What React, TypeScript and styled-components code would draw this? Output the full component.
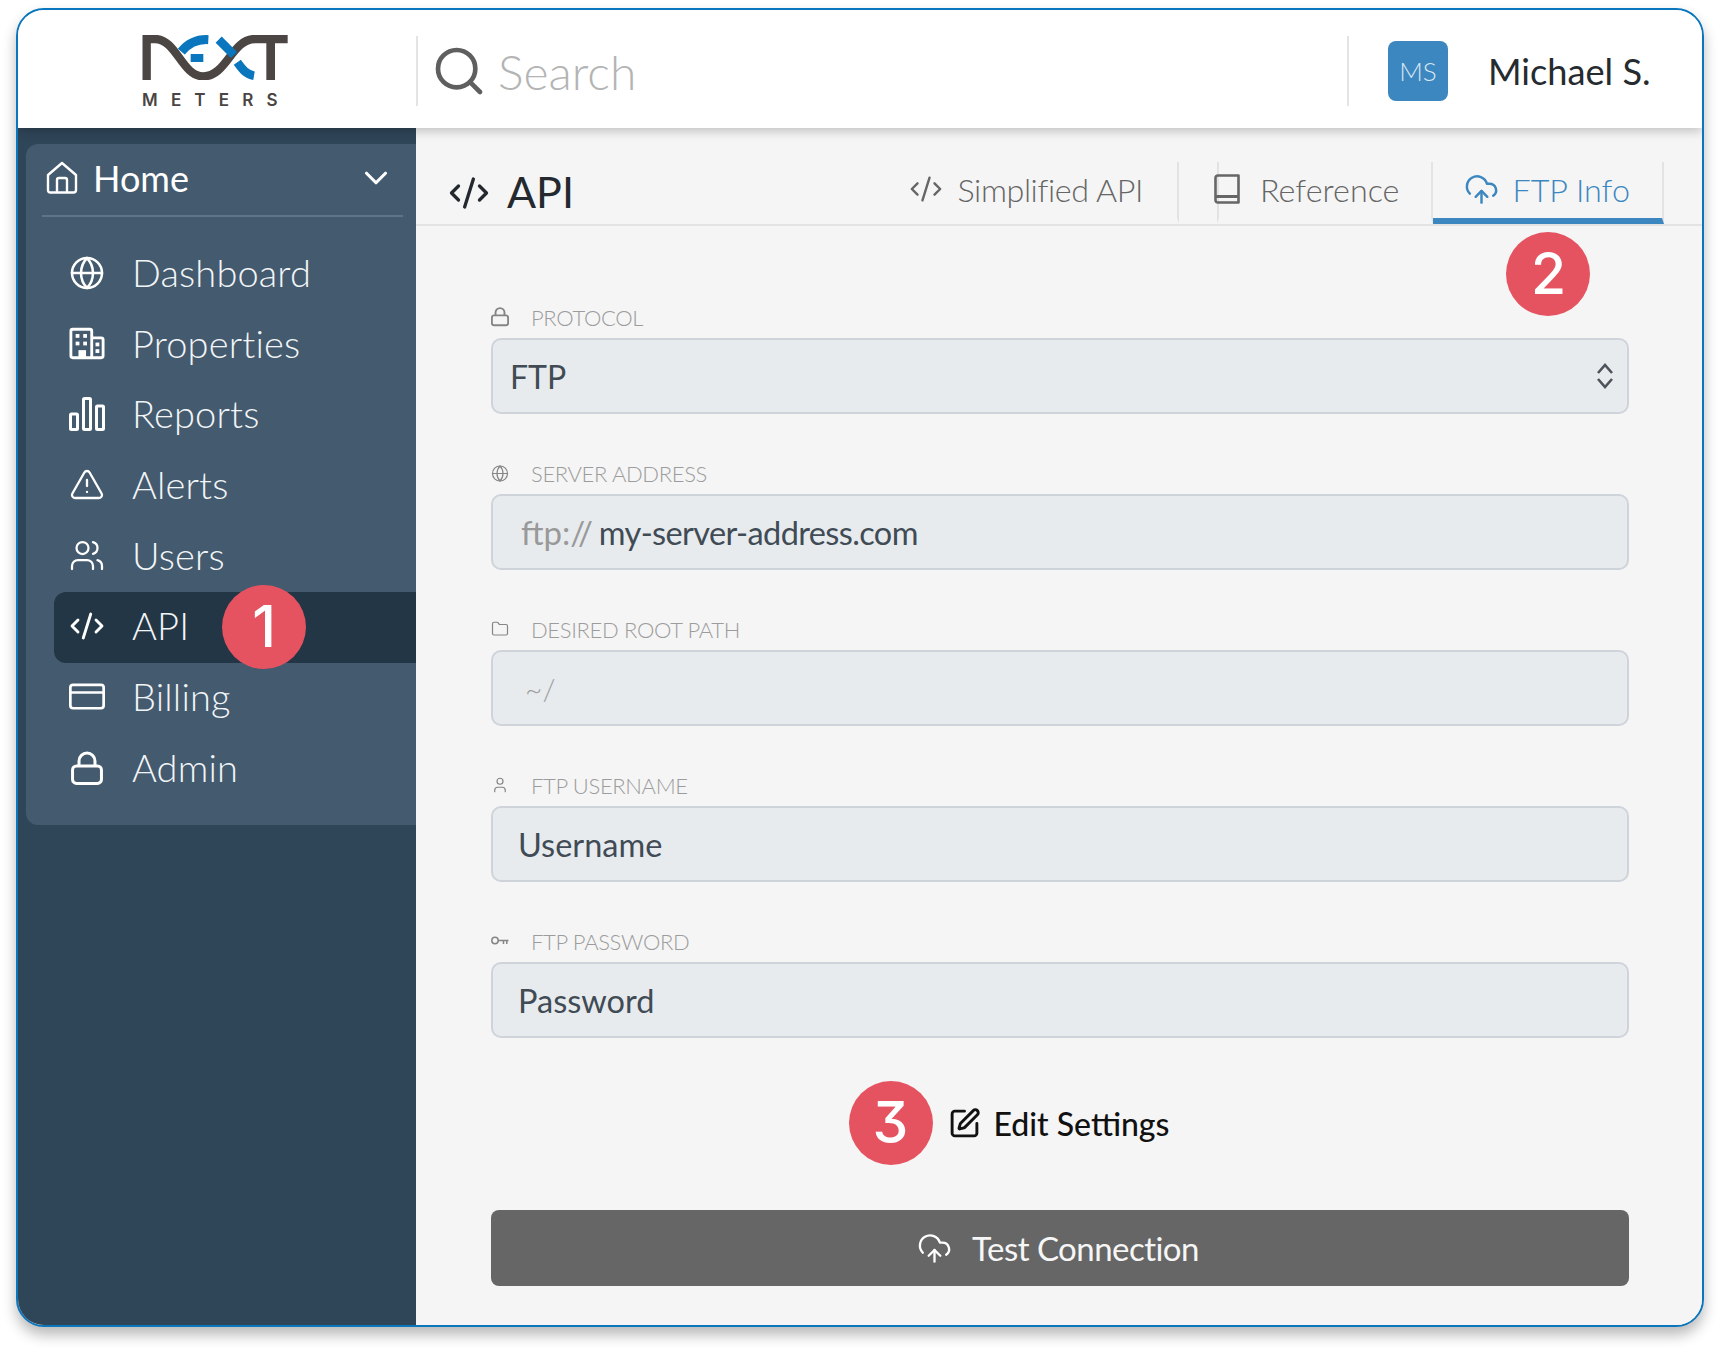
import React from "react";
import styled, { createGlobalStyle } from "styled-components";
import {
  ChevronDown, Globe, TriangleAlert, Users, CodeXml, CloudUpload, Folder, User, SquarePen, Search,
} from "lucide-react";

const Global = createGlobalStyle`
  html, body { margin: 0; padding: 0; background: #fff; }
  body { font-family: Lato, "Open Sans", sans-serif; }
  * { box-sizing: border-box; }
`;

const Page = styled.div`
  width: 1720px;
  height: 1352px;
  padding: 8px 16px 25px;
`;
const Card = styled.div`
  width: 1688px;
  height: 1319px;
  border: 2px solid #0a76bd;
  border-radius: 28px;
  overflow: hidden;
  display: flex;
  flex-direction: column;
  box-shadow: 0 8px 14px rgba(0, 0, 0, 0.28);
  background: #f5f5f5;
`;
const Header = styled.header`
  height: 118px;
  flex: none;
  display: flex;
  align-items: center;
  padding-top: 4px;
  background: #fff;
  position: relative;
  z-index: 2;
  box-shadow: 0 3px 10px rgba(0, 0, 0, 0.22);
`;
const LogoCell = styled.div`
  width: 398px;
  flex: none;
  display: flex;
  flex-direction: column;
  align-items: flex-start;
  padding-left: 124px;
`;
const LogoMark = styled.svg`
  width: 146px;
  height: 45px;
  display: block;
`;
const LogoWord = styled.div`
  margin-top: 12px;
  font-family: Inter, sans-serif;
  font-weight: 600;
  font-size: 17px;
  line-height: 16px;
  letter-spacing: 13.2px;
  color: #4a4543;
  white-space: nowrap;
`;
const HeaderDivider = styled.div`
  width: 2px;
  height: 70px;
  flex: none;
  background: #e4e4e4;
`;
const SearchArea = styled.div`
  flex: 1;
  display: flex;
  align-items: center;
  gap: 11px;
  padding-left: 13px;
  color: #5f5f5f;
`;
const SearchText = styled.span`
  font-weight: 300;
  font-size: 48px;
  color: #b4b4b4;
`;
const UserArea = styled.div`
  width: 353px;
  flex: none;
  display: flex;
  align-items: center;
  padding-left: 39px;
`;
const Avatar = styled.div`
  width: 60px;
  height: 60px;
  border-radius: 8px;
  background: #3d87c0;
  color: #d6e6f2;
  font-weight: 300;
  font-size: 26px;
  display: flex;
  align-items: center;
  justify-content: center;
`;
const UserName = styled.span`
  margin-left: 40px;
  font-size: 36.2px;
  color: #262b2f;
`;

const Body = styled.div`
  flex: 1;
  display: flex;
  min-height: 0;
`;
const Sidebar = styled.aside`
  width: 398px;
  flex: none;
  background: #2f4558;
  padding: 16px 0 0 8px;
`;
const Panel = styled.div`
  height: 681px;
  background: #445a6e;
  border-radius: 12px 0 0 12px;
`;
const HomeRow = styled.div`
  height: 71px;
  display: flex;
  align-items: center;
  padding: 0 21px 4px 20px;
  color: #fff;
`;
const HomeText = styled.span`
  flex: 1;
  margin-left: 15px;
  font-size: 36px;
`;
const PanelDivider = styled.div`
  height: 2px;
  margin: 0 13px 0 16px;
  background: #5f7488;
`;
const NavList = styled.nav`
  margin-top: 22px;
  display: flex;
  flex-direction: column;
`;
const NavRow = styled.div<{ $active?: boolean }>`
  position: relative;
  height: 70.7px;
  margin-left: 28px;
  padding: 0 0 3px 15px;
  display: flex;
  align-items: center;
  gap: 27px;
  color: #fff;
  border-radius: 12px 0 0 12px;
  background: ${(p) => (p.$active ? "#233645" : "transparent")};
`;
const NavIcon = styled.span`
  width: 36px;
  height: 36px;
  flex: none;
  display: flex;
  align-items: center;
  justify-content: center;
`;
const NavText = styled.span`
  font-weight: 300;
  font-size: 38px;
  letter-spacing: 0.15px;
  margin-bottom: 2px;
  color: #f2f5f7;
`;
const Badge = styled.div<{ $x: number; $y: number }>`
  position: absolute;
  left: ${(p) => p.$x}px;
  top: ${(p) => p.$y}px;
  width: 84px;
  height: 84px;
  border-radius: 50%;
  background: #e55361;
  color: #fff;
  font-family: Inter, sans-serif;
  font-feature-settings: "cv09";
  font-weight: 500;
  font-size: 57px;
  line-height: 84px;
  text-align: center;
  z-index: 3;
`;

const Main = styled.main`
  flex: 1;
  display: flex;
  flex-direction: column;
  min-width: 0;
  background: #f5f5f5;
`;
const SubHeader = styled.div`
  height: 98px;
  flex: none;
  padding: 34px 38px 0 32px;
  display: flex;
  align-items: stretch;
  border-bottom: 2px solid #e3e3e3;
`;
const Title = styled.div`
  flex: 1;
  display: flex;
  align-items: center;
  gap: 17px;
  color: #23292e;
`;
const TitleText = styled.span`
  font-size: 43px;
  margin-bottom: 4px;
  color: #23292e;
`;
const Tabs = styled.div`
  display: flex;
  gap: 38px;
`;
const TabGroup = styled.div`
  display: flex;
`;
const Tab = styled.div<{ $active?: boolean; $flush?: boolean; $gap: number; $left: number; $right: number }>`
  position: relative;
  display: flex;
  align-items: center;
  gap: ${(p) => p.$gap}px;
  padding: 0 ${(p) => p.$right}px 2px ${(p) => p.$left}px;
  border-right: 2px solid #e3e3e3;
  border-left: ${(p) => (p.$flush ? "2px solid #e3e3e3" : "none")};
  color: ${(p) => (p.$active ? "#3d87c0" : "#666")};
  border-bottom: 6px solid ${(p) => (p.$active ? "#3d87c0" : "transparent")};
`;
const TabText = styled.span<{ $tight?: boolean }>`
  font-weight: 300;
  font-size: 32.3px;
  letter-spacing: ${(p) => (p.$tight ? "-0.4px" : "0")};
`;
const BookWrap = styled.span`
  display: flex;
  margin-left: -5px;
`;

const Form = styled.div`
  flex: 1;
  padding: 79px 73px 0 75px;
  display: flex;
  flex-direction: column;
`;
const Group = styled.div`
  height: 156px;
  flex: none;
  display: flex;
  flex-direction: column;
`;
const LabelRow = styled.div`
  height: 33px;
  padding-bottom: 9px;
  display: flex;
  align-items: center;
  color: #858585;
`;
const LabelIcon = styled.span`
  width: 18px;
  display: flex;
  justify-content: center;
  margin-right: 22px;
`;
const LabelText = styled.span`
  font-weight: 300;
  font-size: 22px;
  letter-spacing: -0.35px;
  color: #9c9c9c;
`;
const Field = styled.div<{ $pad: number }>`
  height: 76px;
  flex: none;
  padding-left: ${(p) => p.$pad}px;
  display: flex;
  align-items: center;
  position: relative;
  background: #e8ebee;
  border: 2px solid #cfd4da;
  border-radius: 10px;
  font-size: 32.5px;
  color: #414b55;
`;
const SelectValue = styled.span`
  font-size: 32px;
`;
const Prefix = styled.span`
  color: #999;
  font-size: 33px;
  margin-right: 6px;
`;
const Address = styled.span`
  letter-spacing: -0.62px;
`;
const Muted = styled.span`
  font-weight: 300;
  font-size: 30px;
  color: #9f9f9f;
`;
const Stepper = styled.svg`
  position: absolute;
  right: 13px;
  top: 22px;
  width: 18px;
  height: 28px;
`;
const EditRow = styled.div`
  position: relative;
  align-self: center;
  height: 40px;
  margin-top: 18px;
  padding-right: 3px;
  display: flex;
  align-items: center;
  gap: 13px;
  color: #111;
`;
const EditText = styled.span`
  font-size: 32px;
  font-weight: 500;
  color: #111;
`;
const TestButton = styled.div`
  height: 76px;
  margin-top: 67px;
  padding-right: 4px;
  flex: none;
  display: flex;
  align-items: center;
  justify-content: center;
  gap: 20px;
  background: #666;
  border-radius: 8px;
  color: #fff;
`;
const TestText = styled.span`
  font-size: 33px;
  letter-spacing: -0.53px;
  color: #f6f6f6;
`;

const HomeIcon = () => (
  <svg width="32" height="33" viewBox="0 0 32 33" fill="none" stroke="currentColor" strokeWidth="2.4" strokeLinejoin="round">
    <path d="M16 2 L30 14 V29 Q30 31.5 27.5 31.5 H4.5 Q2 31.5 2 29 V14 Z" />
    <path d="M11 31 V19 Q11 17 13 17 H19 Q21 17 21 19 V31" />
  </svg>
);
const BuildingIcon = () => (
  <svg width="40" height="35" viewBox="0 0 38 34" fill="none" stroke="currentColor" strokeWidth="3" strokeLinejoin="round">
    <path d="M4 2 H22 Q24 2 24 4 V32 H4 Q2 32 2 30 V4 Q2 2 4 2 Z" />
    <path d="M24 11 H34 Q36 11 36 13 V30 Q36 32 34 32 H24" />
    <g fill="currentColor" stroke="none">
      <rect x="7" y="7" width="4" height="4" /><rect x="15" y="7" width="4" height="4" />
      <rect x="7" y="15" width="4" height="4" /><rect x="15" y="15" width="4" height="4" />
      <rect x="28" y="16" width="4" height="4" /><rect x="28" y="23" width="4" height="4" />
      <rect x="10" y="24" width="8" height="8" />
    </g>
  </svg>
);
const BarsIcon = () => (
  <svg width="36" height="34" viewBox="0 0 36 34" fill="none" stroke="currentColor" strokeWidth="3">
    <rect x="1.5" y="17" width="7" height="15.5" rx="1" />
    <rect x="14.5" y="1.5" width="7" height="31" rx="1" />
    <rect x="27.5" y="9" width="7" height="23.5" rx="1" />
  </svg>
);
const CardIcon = () => (
  <svg width="40" height="30" viewBox="0 0 40 30" fill="none" stroke="currentColor" strokeWidth="3">
    <rect x="1.5" y="1.5" width="37" height="26" rx="3" />
    <path d="M1.5 10 H38.5" />
  </svg>
);
const LockIcon = ({ w = 32 }: { w?: number }) => (
  <svg width={w} height={w * 1.06} viewBox="0 0 32 34" fill="none" stroke="currentColor" strokeWidth={w < 20 ? 3.4 : 3}>
    <rect x="1.5" y="15" width="29" height="17.5" rx="4" />
    <path d="M8 15 V10 A8 8 0 0 1 24 10 V15" />
  </svg>
);
const BookIcon = () => (
  <svg width="26" height="30" viewBox="0 0 26 30" fill="none" stroke="currentColor" strokeWidth="2.6" strokeLinejoin="round">
    <path d="M4 1.5 H24.5 V28.5 H4 Q1.5 28.5 1.5 26 V4 Q1.5 1.5 4 1.5 Z" />
    <path d="M1.5 22.5 H24.5" strokeWidth="3" />
  </svg>
);
const KeyIcon = () => (
  <svg width="18" height="10" viewBox="0 0 18 10" fill="none" stroke="currentColor" strokeWidth="1.5">
    <circle cx="4" cy="4.5" r="3.2" />
    <path d="M7.2 4.5 H17.5 M12.5 4.5 V8 M15.8 4.5 V8" />
  </svg>
);

const nav: { label: string; icon: React.ReactNode; active?: boolean }[] = [
  { label: "Dashboard", icon: <Globe size={44} strokeWidth={1.7} /> },
  { label: "Properties", icon: <BuildingIcon /> },
  { label: "Reports", icon: <BarsIcon /> },
  { label: "Alerts", icon: <TriangleAlert size={47} strokeWidth={1.55} /> },
  { label: "Users", icon: <Users size={49} strokeWidth={1.5} /> },
  { label: "API", icon: <CodeXml size={44} strokeWidth={1.9} />, active: true },
  { label: "Billing", icon: <CardIcon /> },
  { label: "Admin", icon: <LockIcon /> },
];

export default function App() {
  return (
    <Page>
      <Global />
      <Card>
        <Header>
          <LogoCell>
            <LogoMark viewBox="67 48 436 135" fill="none">
              <path d="M80 183 V60 H105 C170 60 185 172 250 172 C320 172 335 60 405 60 H503" stroke="#4b4644" strokeWidth="25" />
              <path d="M452 183 V60" stroke="#4b4644" strokeWidth="26" />
              <path d="M265 62 C228 60 204 74 184 98" stroke="#0a76bd" strokeWidth="27" />
              <path d="M212 117 H250" stroke="#0a76bd" strokeWidth="24" />
              <path d="M296 62 L342 108" stroke="#0a76bd" strokeWidth="26" />
              <path d="M352 130 C366 150 378 166 402 170" stroke="#0a76bd" strokeWidth="26" />
            </LogoMark>
            <LogoWord>METERS</LogoWord>
          </LogoCell>
          <HeaderDivider />
          <SearchArea>
            <Search size={56} strokeWidth={2} />
            <SearchText>Search</SearchText>
          </SearchArea>
          <HeaderDivider />
          <UserArea>
            <Avatar>MS</Avatar>
            <UserName>Michael S.</UserName>
          </UserArea>
        </Header>
        <Body>
          <Sidebar>
            <Panel>
              <HomeRow>
                <HomeIcon />
                <HomeText>Home</HomeText>
                <ChevronDown size={38} strokeWidth={2} />
              </HomeRow>
              <PanelDivider />
              <NavList>
                {nav.map((n) => (
                  <NavRow key={n.label} $active={n.active}>
                    <NavIcon>{n.icon}</NavIcon>
                    <NavText>{n.label}</NavText>
                    {n.active && <Badge $x={168} $y={-7}>1</Badge>}
                  </NavRow>
                ))}
              </NavList>
            </Panel>
          </Sidebar>
          <Main>
            <SubHeader>
              <Title>
                <CodeXml size={42} strokeWidth={1.9} />
                <TitleText>API</TitleText>
              </Title>
              <Tabs>
                <Tab $gap={14} $left={33} $right={34}>
                  <CodeXml size={34} strokeWidth={1.7} />
                  <TabText $tight>Simplified API</TabText>
                </Tab>
                <TabGroup>
                  <Tab $flush $gap={20} $left={0} $right={32}>
                    <BookWrap><BookIcon /></BookWrap>
                    <TabText>Reference</TabText>
                  </Tab>
                  <Tab $active $gap={13} $left={31} $right={32}>
                    <CloudUpload size={35} strokeWidth={1.7} />
                    <TabText>FTP Info</TabText>
                    <Badge $x={73} $y={70}>2</Badge>
                  </Tab>
                </TabGroup>
              </Tabs>
            </SubHeader>
            <Form>
              <Group>
                <LabelRow>
                  <LabelIcon><LockIcon w={18} /></LabelIcon>
                  <LabelText>PROTOCOL</LabelText>
                </LabelRow>
                <Field $pad={17}>
                  <SelectValue>FTP</SelectValue>
                  <Stepper viewBox="0 0 18 28" fill="none" stroke="#4c535a" strokeWidth="2.6">
                    <path d="M2 11 L9 3 L16 11" />
                    <path d="M2 17 L9 25 L16 17" />
                  </Stepper>
                </Field>
              </Group>
              <Group>
                <LabelRow>
                  <LabelIcon><Globe size={21} strokeWidth={1.6} /></LabelIcon>
                  <LabelText>SERVER ADDRESS</LabelText>
                </LabelRow>
                <Field $pad={28}>
                  <Prefix>ftp://</Prefix><Address>my-server-address.com</Address>
                </Field>
              </Group>
              <Group>
                <LabelRow>
                  <LabelIcon><Folder size={22} strokeWidth={1.6} /></LabelIcon>
                  <LabelText>DESIRED ROOT PATH</LabelText>
                </LabelRow>
                <Field $pad={32}>
                  <Muted>~/</Muted>
                </Field>
              </Group>
              <Group>
                <LabelRow>
                  <LabelIcon><User size={22} strokeWidth={1.6} /></LabelIcon>
                  <LabelText>FTP USERNAME</LabelText>
                </LabelRow>
                <Field $pad={25}>Username</Field>
              </Group>
              <Group>
                <LabelRow>
                  <LabelIcon><KeyIcon /></LabelIcon>
                  <LabelText>FTP PASSWORD</LabelText>
                </LabelRow>
                <Field $pad={25}>Password</Field>
              </Group>
              <EditRow>
                <Badge $x={-99} $y={-22}>3</Badge>
                <SquarePen size={33} strokeWidth={2.1} />
                <EditText>Edit Settings</EditText>
              </EditRow>
              <TestButton>
                <CloudUpload size={35} strokeWidth={1.6} />
                <TestText>Test Connection</TestText>
              </TestButton>
            </Form>
          </Main>
        </Body>
      </Card>
    </Page>
  );
}
